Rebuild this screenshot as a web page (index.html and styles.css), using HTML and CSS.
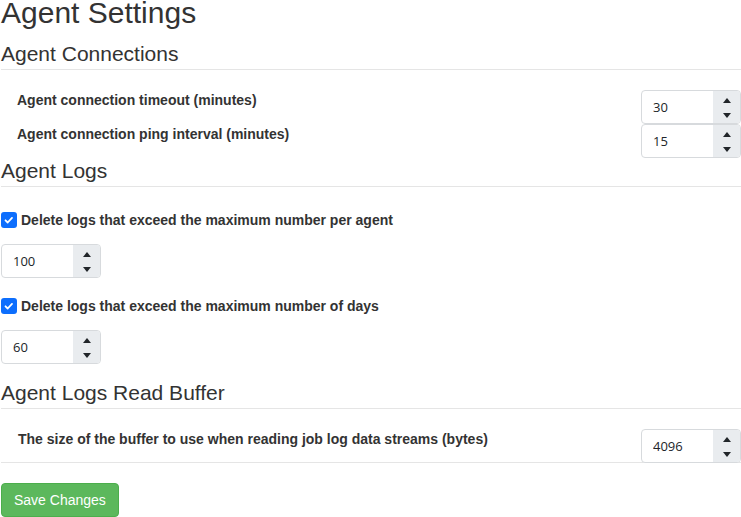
FILE: index.html
```html
<!DOCTYPE html>
<html lang="en">
<head>
  <meta charset="UTF-8">
  <title>Agent Settings</title>
  <link rel="stylesheet" href="styles.css">
</head>
<body>

<div class="page">
  <h1 class="page-title">Agent Settings</h1>

  <h2 class="section-title">Agent Connections</h2>
  <div class="section-body">
    <div class="setting-row">
      <label class="setting-label">Agent connection timeout (minutes)</label>
      <div class="number-box">
        <input class="number-value" type="text" value="30">
        <span class="spin"><span class="arrow-up"></span><span class="arrow-down"></span></span>
      </div>
    </div>
    <div class="setting-row">
      <label class="setting-label">Agent connection ping interval (minutes)</label>
      <div class="number-box">
        <input class="number-value" type="text" value="15">
        <span class="spin"><span class="arrow-up"></span><span class="arrow-down"></span></span>
      </div>
    </div>
  </div>

  <h2 class="section-title">Agent Logs</h2>
  <div class="section-body logs">
    <label class="check-row">
      <span class="check-box">
        <svg width="16" height="16" viewBox="0 0 16 16"><path d="M4.5 8.3l2.2 2.2 4.3-4.6" fill="none" stroke="#fff" stroke-width="1.8" stroke-linecap="round" stroke-linejoin="round"/></svg>
      </span>
      Delete logs that exceed the maximum number per agent
    </label>
    <div class="number-box">
      <input class="number-value" type="text" value="100">
      <span class="spin"><span class="arrow-up"></span><span class="arrow-down"></span></span>
    </div>

    <label class="check-row">
      <span class="check-box">
        <svg width="16" height="16" viewBox="0 0 16 16"><path d="M4.5 8.3l2.2 2.2 4.3-4.6" fill="none" stroke="#fff" stroke-width="1.8" stroke-linecap="round" stroke-linejoin="round"/></svg>
      </span>
      Delete logs that exceed the maximum number of days
    </label>
    <div class="number-box">
      <input class="number-value" type="text" value="60">
      <span class="spin"><span class="arrow-up"></span><span class="arrow-down"></span></span>
    </div>
  </div>

  <h2 class="section-title buffer">Agent Logs Read Buffer</h2>
  <div class="section-body">
    <div class="setting-row bordered">
      <label class="setting-label wide">The size of the buffer to use when reading job log data streams (bytes)</label>
      <div class="number-box">
        <input class="number-value" type="text" value="4096">
        <span class="spin"><span class="arrow-up"></span><span class="arrow-down"></span></span>
      </div>
    </div>
  </div>

  <button class="btn-save">Save Changes</button>
</div>

</body>
</html>
```

FILE: styles.css
```css
html {
  overflow: hidden;
}
body {
  margin: 0;
  font-family: "Liberation Sans", Arial, Helvetica, sans-serif;
  color: #333;
  background: #fff;
}
.page {
  padding: 0 0 0 1px;
}
.page-title {
  margin: 0 0 15px;
  font-size: 30px;
  font-weight: normal;
  line-height: 26px;
}
.section-title {
  margin: 0;
  padding-bottom: 3px;
  font-size: 21px;
  font-weight: normal;
  line-height: 25px;
  border-bottom: 1px solid #e5e5e5;
}
.section-title.buffer {
  margin-top: 16px;
}
.section-body {
  padding-top: 20px;
}
.section-body.logs {
  padding-top: 24px;
}
.setting-row {
  display: flex;
  justify-content: space-between;
  align-items: flex-start;
}
.setting-row.bordered {
  border-bottom: 1px solid #e5e5e5;
}
.setting-row.bordered .number-box {
  margin-bottom: -1px;
}
.setting-label {
  padding-left: 16px;
  font-size: 14px;
  font-weight: bold;
  line-height: 20px;
}
.setting-label.wide {
  padding-left: 17px;
}
.number-box {
  display: flex;
  width: 100px;
  height: 34px;
  box-sizing: border-box;
  border: 1px solid #d7dadd;
  border-radius: 4px;
  overflow: hidden;
  background: #fff;
}
.number-value {
  flex: 1;
  min-width: 0;
  border: none;
  outline: none;
  padding: 0 0 0 11px;
  font-family: "Open Sans", "Noto Sans", sans-serif;
  font-size: 13px;
  color: #212529;
  background: transparent;
}
.spin {
  width: 27px;
  display: flex;
  flex-direction: column;
  align-items: center;
  justify-content: space-between;
  padding: 7px 0 5px;
  box-sizing: border-box;
  background: #e9ecef;
}
.arrow-up {
  width: 0;
  height: 0;
  border-left: 4px solid transparent;
  border-right: 4px solid transparent;
  border-bottom: 5px solid #212529;
}
.arrow-down {
  width: 0;
  height: 0;
  border-left: 4px solid transparent;
  border-right: 4px solid transparent;
  border-top: 5px solid #212529;
}
.check-row {
  display: flex;
  align-items: center;
  gap: 4px;
  font-size: 14px;
  font-weight: bold;
  line-height: 18px;
  margin-bottom: 15px;
}
.check-box {
  width: 16px;
  height: 16px;
  border-radius: 3px;
  background: #0d6efd;
  display: flex;
}
.logs .number-box + .check-row {
  margin-top: 19px;
}
.btn-save {
  margin-top: 20px;
  padding: 6px 12px;
  font-family: "Liberation Sans", Arial, sans-serif;
  font-size: 14px;
  line-height: 20px;
  color: #fff;
  background: #5cb85c;
  border: 1px solid #4cae4c;
  border-radius: 4px;
  cursor: pointer;
}
```
